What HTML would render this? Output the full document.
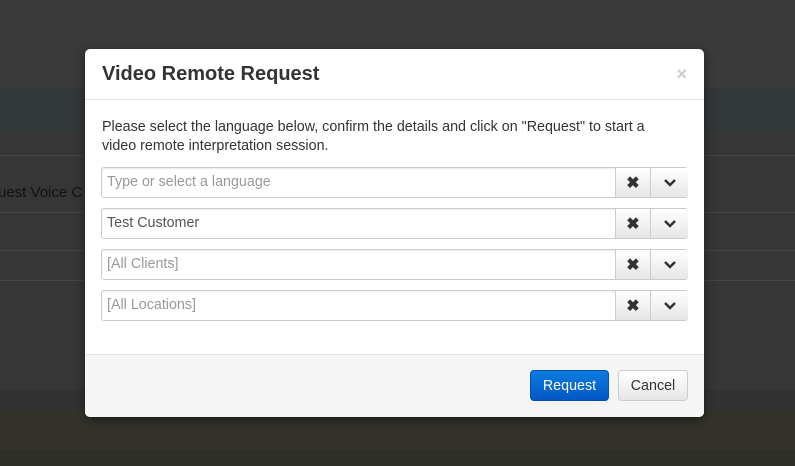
<!DOCTYPE html><html><head><style>
body{margin:0;width:795px;height:466px;background:#363636;font-family:"Liberation Sans",sans-serif;position:relative;overflow:hidden}
.b{position:absolute;left:0;width:795px}
.m{position:absolute;left:85px;top:49px;width:619px;height:368px;background:#fff;border-radius:5px;box-shadow:0 3px 10px rgba(0,0,0,.5);overflow:hidden}
.h{height:50px;border-bottom:1px solid #e5e5e5;position:relative}
.h h3{margin:0;position:absolute;left:17px;top:14px;font-size:20px;color:#333;font-weight:bold}
.x{position:absolute;right:17px;top:15px;color:#ccc;font-size:18px;font-weight:bold}
p{position:absolute;left:17px;top:69px;margin:0;font-size:14.3px;line-height:19px;color:#333;width:555px}
.r{position:absolute;left:16px;width:585px;height:29px;border:1px solid #ccc;border-radius:3px;box-shadow:inset 0 1px 1px rgba(0,0,0,.08)}
.r span{position:absolute;left:5px;top:6px;font-size:14.3px;color:#999}
.r .t{color:#555}
.bt{position:absolute;top:0;height:29px;border-left:1px solid #ccc;background:linear-gradient(#fff,#e6e6e6);display:flex;align-items:center;justify-content:center;color:#333;font-weight:bold}
.f{position:absolute;left:0;top:305px;width:619px;height:63px;background:#f5f5f5;border-top:1px solid #e5e5e5}
.btn{position:absolute;top:15px;height:29px;border-radius:4px;font-size:14.3px;display:flex;align-items:center;justify-content:center}
</style></head><body>
<div class="b" style="top:0;height:88px;background:#3a3a3a"></div>
<div class="b" style="top:88px;height:46px;background:#323838"></div>
<div class="b" style="top:155px;height:1px;background:#444"></div>
<div class="b" style="top:212px;height:1px;background:#444"></div>
<div class="b" style="top:250px;height:1px;background:#444"></div>
<div class="b" style="top:280px;height:1px;background:#444"></div>
<div class="b" style="top:390px;height:20px;background:#323232"></div>
<div class="b" style="top:410px;height:40px;background:#34332b"></div>
<div class="b" style="top:450px;height:16px;background:#2f2f2a"></div>
<div style="position:absolute;left:-2px;top:184px;color:#111;font-size:15px">uest Voice C</div>
<div class="m">
<div class="h"><h3>Video Remote Request</h3><span class="x">×</span></div>
<p>Please select the language below, confirm the details and click on "Request" to start a video remote interpretation session.</p>
<div class="r" style="top:118px"><span>Type or select a language</span><div class="bt" style="left:513px;width:34px">✖</div><div class="bt" style="left:548px;width:37px"><svg width="12" height="8"><path d="M1 1l5 5 5-5" stroke="#333" stroke-width="2.5" fill="none"/></svg></div></div>
<div class="r" style="top:159px"><span class="t">Test Customer</span><div class="bt" style="left:513px;width:34px">✖</div><div class="bt" style="left:548px;width:37px"><svg width="12" height="8"><path d="M1 1l5 5 5-5" stroke="#333" stroke-width="2.5" fill="none"/></svg></div></div>
<div class="r" style="top:200px"><span>[All Clients]</span><div class="bt" style="left:513px;width:34px">✖</div><div class="bt" style="left:548px;width:37px"><svg width="12" height="8"><path d="M1 1l5 5 5-5" stroke="#333" stroke-width="2.5" fill="none"/></svg></div></div>
<div class="r" style="top:241px"><span>[All Locations]</span><div class="bt" style="left:513px;width:34px">✖</div><div class="bt" style="left:548px;width:37px"><svg width="12" height="8"><path d="M1 1l5 5 5-5" stroke="#333" stroke-width="2.5" fill="none"/></svg></div></div>
<div class="f">
<div class="btn" style="left:445px;width:77px;background:linear-gradient(#0a7be0,#0457c4);color:#fff;border:1px solid #0450b0">Request</div>
<div class="btn" style="left:533px;width:68px;background:linear-gradient(#fff,#e6e6e6);color:#333;border:1px solid #ccc">Cancel</div>
</div>
</div>
</body></html>
